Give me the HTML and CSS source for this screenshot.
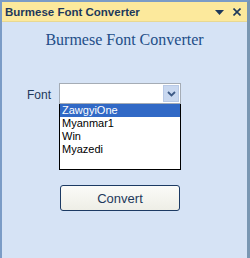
FILE: index.html
```html
<!DOCTYPE html>
<html>
<head>
<meta charset="utf-8">
<link rel="stylesheet" href="styles.css">
</head>
<body>
<div class="pane">
  <div class="titlebar">
    <span class="title">Burmese Font Converter</span>
    <span class="tools">
      <svg class="menu-ico" width="9" height="5" viewBox="0 0 9 5"><polygon points="0,0 9,0 4.5,5" fill="#1e395b"/></svg>
      <svg class="close-ico" width="8" height="8" viewBox="0 0 8 8"><path d="M0.5 0.5 L7.5 7.5 M7.5 0.5 L0.5 7.5" stroke="#1e395b" stroke-width="1.6"/></svg>
    </span>
  </div>
  <div class="body">
    <h1 class="heading">Burmese Font Converter</h1>
    <div class="row">
      <span class="label">Font</span>
      <div class="combo-wrap">
        <div class="combo">
          <div class="combo-btn">
            <svg width="9" height="6" viewBox="0 0 9 6"><path d="M1 1 L4.5 4.5 L8 1" stroke="#3d5a86" stroke-width="1.8" fill="none"/></svg>
          </div>
        </div>
        <ul class="list">
          <li class="sel">ZawgyiOne</li>
          <li>Myanmar1</li>
          <li>Win</li>
          <li>Myazedi</li>
        </ul>
      </div>
    </div>
    <div class="btn-row">
      <button class="btn">Convert</button>
    </div>
  </div>
</div>
</body>
</html>
```

FILE: styles.css
```css
html, body { margin: 0; padding: 0; }
body { width: 250px; height: 258px; background: #d6e3f5; overflow: hidden; }
.pane {
  width: 250px; height: 258px; box-sizing: border-box;
  border-left: 2px solid #7b9cc6;
  border-top: 2px solid #7b9cc6;
  border-right: 3px solid #7a97b2;
  background: #d6e3f5;
  display: flex; flex-direction: column;
}
.titlebar {
  height: 19px;
  background: #fce99c;
  border-bottom: 1px solid #e8d892;
  display: flex; align-items: center; justify-content: space-between;
  padding: 0 6px 0 3px;
}
.title {
  font-family: "Liberation Sans", sans-serif;
  font-weight: bold; font-size: 11.5px; color: #1e395b;
}
.tools { display: flex; align-items: center; gap: 9px; }
.menu-ico { margin-top: 1px; }
.body { flex: 1; display: flex; flex-direction: column; align-items: flex-start; }
.heading {
  align-self: center;
  margin: 8px 0 0 0;
  font-family: "Liberation Serif", serif;
  font-weight: normal; font-size: 16px; line-height: 20px; color: #234e88;
}
.row {
  display: flex; align-items: flex-start;
  margin-top: 33px; margin-left: 25px;
}
.label {
  font-family: "Liberation Sans", sans-serif; font-size: 12px; color: #1e395b;
  margin-top: 5px; width: 32px;
}
.combo-wrap { width: 122px; }
.combo {
  height: 21px; box-sizing: border-box;
  border: 1px solid #a5acb5; background: #fff;
  display: flex; align-items: center; justify-content: flex-end;
  padding-right: 1px;
}
.combo-btn {
  width: 16px; height: 17px;
  background: #c9d8f0; border: 1px solid #b8c9e6; box-sizing: border-box;
  display: flex; align-items: center; justify-content: center;
}
.list {
  list-style: none; margin: 0; padding: 0 0 13px 0;
  border: 1px solid #000; border-top: none;
  background: #fff;
  font-family: "Liberation Sans", sans-serif; font-size: 11px; color: #000;
}
.list li { height: 13px; line-height: 13px; padding-left: 2px; }
.list li.sel { background: #3169c6; color: #fff; }
.btn-row { margin-top: 15px; margin-left: 58px; }
.btn {
  width: 120px; height: 26px; display: block;
  border: 1px solid #1c3a63; border-radius: 3px;
  background: linear-gradient(#fbfbf8, #eeeee6);
  font-family: "Liberation Sans", sans-serif; font-size: 13px; color: #1e395b;
  padding: 0;
}
```
